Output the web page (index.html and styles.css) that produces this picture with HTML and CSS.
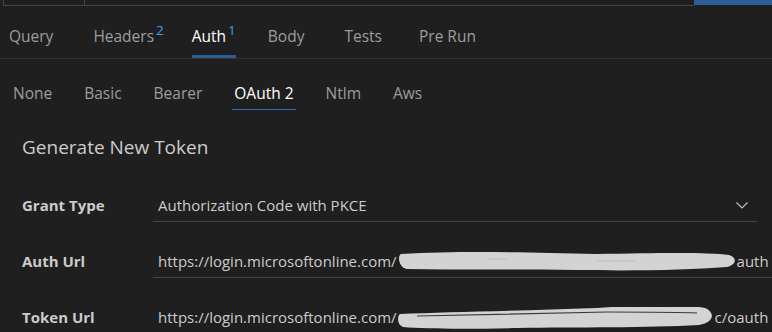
FILE: index.html
```html
<!DOCTYPE html>
<html lang="en">
<head>
    <meta charset="UTF-8">
    <title>Auth - OAuth 2</title>
    <link rel="stylesheet" href="styles.css">
</head>
<body>
    <div class="url-bar">
        <div class="url-input">
            <div class="method"></div>
            <div class="address"></div>
        </div>
        <button class="send-btn"></button>
    </div>

    <div class="tabs">
        <div class="tab">Query</div>
        <div class="tab">Headers<sup>2</sup></div>
        <div class="tab active">Auth<sup>1</sup></div>
        <div class="tab">Body</div>
        <div class="tab">Tests</div>
        <div class="tab">Pre Run</div>
    </div>

    <div class="sub-tabs">
        <div class="sub-tab">None</div>
        <div class="sub-tab">Basic</div>
        <div class="sub-tab">Bearer</div>
        <div class="sub-tab active">OAuth 2</div>
        <div class="sub-tab">Ntlm</div>
        <div class="sub-tab">Aws</div>
    </div>

    <div class="oauth-form">
        <h3>Generate New Token</h3>

        <div class="field">
            <label>Grant Type</label>
            <div class="value select">
                <span>Authorization Code with PKCE</span>
                <svg class="chevron" width="14" height="14" viewBox="0 0 14 14">
                    <path d="M1.5 4.5 L7 10 L12.5 4.5" fill="none" stroke="#c5c5c5" stroke-width="1.1"/>
                </svg>
            </div>
        </div>

        <div class="field">
            <label>Auth Url</label>
            <div class="value url">
                <span>https://login.microsoftonline.com/</span>
                <svg class="redacted" width="340" height="22" viewBox="0 0 340 22">
                    <path d="M4 4 C60 1 120 2 200 4 C260 3 310 2 332 5 C340 7 340 15 330 17 C290 20 240 21 180 20 C120 19 60 20 10 19 C2 18 0 6 4 4 Z" fill="#d3d3d3"/>
                    <path d="M90 9 L110 9 M200 11 L240 11" stroke="#bdbdbd" stroke-width="1"/>
                </svg>
                <span>auth</span>
            </div>
        </div>

        <div class="field">
            <label>Token Url</label>
            <div class="value url">
                <span>https://login.microsoftonline.com/</span>
                <svg class="redacted" width="318" height="26" viewBox="0 0 318 26">
                    <path d="M3 10 C50 8 120 7 200 4 C240 1 290 0 308 4 C318 8 318 18 302 21 C250 24 180 23 120 24 C70 25 30 25 6 23 C0 21 0 12 3 10 Z" fill="#d3d3d3"/>
                    <path d="M20 12 C90 10 160 9 210 8 C250 8 280 8 300 9" fill="none" stroke="#3a3a3a" stroke-width="1.2"/>
                </svg>
                <span>c/oauth</span>
            </div>
        </div>
    </div>
</body>
</html>
```

FILE: styles.css
```css
body {
    margin: 0;
    background-color: #1f1f1f;
    color: #cccccc;
    font-family: "Open Sans", "Noto Sans", sans-serif;
    font-size: 15px;
    overflow: hidden;
}
.url-bar {
    display: flex;
    height: 6px;
}
.url-input {
    flex-grow: 1;
    display: flex;
    margin-left: 3px;
    border-left: 1px solid #454545;
    border-bottom: 1px solid #454545;
}
.method {
    width: 80px;
    border-right: 1px solid #454545;
}
.address {
    flex-grow: 1;
}
.send-btn {
    width: 78px;
    height: 5px;
    border: none;
    padding: 0;
    background-color: #2c5f97;
}
.tabs {
    display: flex;
    padding-left: 9px;
    margin-top: 16px;
    border-bottom: 1px solid #333333;
}
.tab {
    color: #9d9d9d;
    font-size: 15.5px;
    padding: 3px 0 8px;
    margin-right: 40px;
    border-bottom: 3px solid transparent;
}
.tab:nth-child(2) {
    margin-right: 28px;
}
.tab:nth-child(5) {
    margin-right: 37px;
}
.tab.active {
    color: #ffffff;
    border-bottom-color: #2c5f97;
    margin-right: 32px;
}
.tab sup {
    color: #4a9fe0;
    font-size: 13.5px;
    margin-left: 2px;
    vertical-align: 7px;
    line-height: 0;
}
.sub-tabs {
    display: flex;
    padding-left: 11px;
    margin-top: 23px;
}
.sub-tab {
    color: #9d9d9d;
    font-size: 15.5px;
    padding: 0 2px 5px;
    margin-right: 28px;
    border-bottom: 1px solid transparent;
}
.sub-tab.active {
    color: #ffffff;
    border-bottom-color: #2c6fb5;
}
.oauth-form {
    padding-left: 22px;
}
.oauth-form h3 {
    margin: 24px 0 35px;
    font-size: 19px;
    font-weight: 400;
    color: #cccccc;
}
.field {
    display: flex;
    align-items: baseline;
    margin-bottom: 29px;
}
.field label {
    width: 131px;
    font-size: 15px;
    font-weight: 700;
    color: #cccccc;
}
.value {
    flex-grow: 1;
    display: flex;
    align-items: center;
    padding: 0 0 6px 5px;
    border-bottom: 1px solid #454545;
    white-space: nowrap;
    overflow: hidden;
}
.value.select {
    margin-right: 15px;
}
.value.select span {
    flex-grow: 1;
}
.chevron {
    margin-right: 8px;
}
.redacted {
    flex-shrink: 0;
    margin: -4px 0;
}
```
